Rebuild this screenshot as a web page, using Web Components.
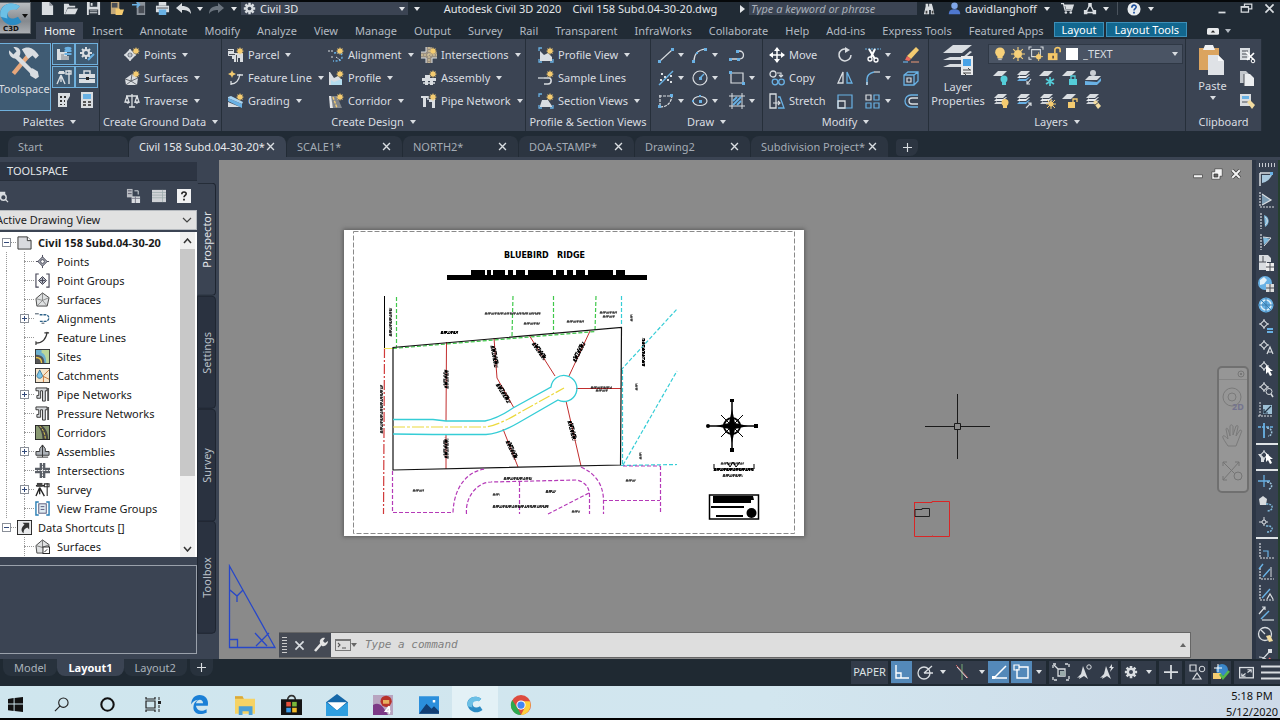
<!DOCTYPE html>
<html lang="en">
<head>
<meta charset="utf-8">
<title>Autodesk Civil 3D 2020 - Civil 158 Subd.04-30-20.dwg</title>
<style>
  html, body { margin: 0; height: 100%; background: #000; overflow: hidden; }
  body { font: 11px/16px "Noto Sans", "Open Sans", sans-serif; color: #d6dade; }
</style>
</head>
<body>
<c3d-app></c3d-app>
<script>
const BASE = `
  * { box-sizing: border-box; }
  button, a, input, select { font: inherit; color: inherit; background: none; border: 0; margin: 0; padding: 0; text-decoration: none; border-radius: 0; outline: 0; }
  button { display: inline-flex; align-items: center; justify-content: center; white-space: nowrap; }
  select { appearance: none; }
  .caret { display: block; flex: none; width: 0; height: 0; border: 3px solid transparent; border-top: 4px solid currentColor; border-bottom: 0; }
`;
function define(tag, css, render) {
  customElements.define(tag, class extends HTMLElement {
    connectedCallback() {
      if (this.shadowRoot) return;
      const t = document.createElement('template');
      t.innerHTML = `<style>${BASE}${css}</style>` + (typeof render === 'function' ? render(this) : render);
      this.attachShadow({ mode: 'open' }).append(t.content.cloneNode(true));
    }
  });
}

/* ---------- icons ---------- */
const W = '#d9dde1', B = '#69b1e4', Y = '#f4cb70', D = '#4a4f57';
const star = `<path fill="${Y}" d="M12 0l.9 2 2-.8-.8 2 1.9.8-1.9.9.8 2-2-.8-.9 1.9-.9-1.9-2 .8.8-2L8 4l1.900-.8-.8-2 2 .8z"/>`;
const l = (d, c = W, w = 1.2, x = '') => `<path fill="none" stroke="${c}" stroke-width="${w}" d="${d}" ${x}/>`;
const f = (d, c = W, x = '') => `<path fill="${c}" d="${d}" ${x}/>`;
const stack = (a, b) => f('M5 1h9l-4 4H1z') + f('M4 5l-3 3h9l4-4h-1l-3 2H4z', a) + f('M4 8l-3 3h9l4-4h-1l-3 2H4z', b);
const target = (c = W) => l('M6 1v10M1 6h10', c, 1) + `<rect x="3.500" y="3.500" width="5" height="5" transform="rotate(45 6 6)" fill="#3b4453" stroke="${c}"/>`;
const ICONS = {
  new: f('M2 1h8l4 4v10H2z') + f('M10 1v4h4z', '#8a9099'),
  open: f('M1 3h5l1 2h6v2H5l-3 7H1z') + f('M5 8h11l-3 6H2z'),
  save: f('M1 1h14v14H1z') + f('M4 1h8v5H4zM3 9h10v6H3z', '#2a333d') + f('M5 2h2v3H5zM4 10h8v1H4zM4 12h8v1H4z'),
  saveas: f('M2 0h9v14H2z', '#c3a879') + f('M3 2h6v5H3z', D) + f('M7 8h4l1 1h4l-2 6H7z', Y),
  import: f('M5 1h9v14H5z', '#8b929a') + f('M7 5h6v8H7z', D) + l('M0 4h8M5 1l3 3-3 3', B, 1.6),
  print: f('M4 1h8v4H4z') + f('M1 5h14v7H1z') + f('M4 9h8v6H4z', B) + f('M2 7h12v1H2z', D),
  undo: f('M6 2v3c5 0 9 2 9 8-2-3-4-4-9-4v3L0 7z'),
  redo: f('M10 2v3C5 5 1 7 1 13c2-3 4-4 9-4v3l6-5z', '#6b747e'),
  gear: l('M8 1v14M1 8h14M3 3l10 10M13 3L3 13', W, 3) + `<circle cx="8" cy="8" r="5" fill="${W}"/><circle cx="8" cy="8" r="2.300" fill="#3b4453"/>`,
  binoc: f('M3 2h3v3h1V2h3l1 3 2 9H9v-5H7v5H1l2-9z', W) + f('M3 10h2v3H3zM10 10h2v3h-2z', '#444'),
  user: `<circle cx="8" cy="4.500" r="4" fill="#7fa6e8"/>` + f('M1 15c0-5 3-6 7-6s7 1 7 6z', '#4f78cf'),
  cart: l('M0 2h3l2 8h8l2-6H4', W, 1.6) + `<circle cx="6" cy="13" r="1.600" fill="${W}"/><circle cx="12" cy="13" r="1.600" fill="${W}"/>` + f('M5 4h10l-2 5H6z'),
  store: l('M8 3L3 12h10z', W, 1.5) + f('M6 1h4v4H6zM1 9h4v5H1zM11 9h4v5h-4z'),
  help: `<circle cx="8" cy="8" r="7.500" fill="#e9edf0"/><path d="M5.500 6.500c0-4 5-3.500 5-.8 0 1.800-2.500 1.900-2.500 4" fill="none" stroke="#1d4f9c" stroke-width="1.800"/><path d="M7 11h2v2H7z" fill="#1d4f9c"/>`,
  min: f('M4 11h8v2H4z'),
  restore: l('M5.500 5V2.500h9v6H11', W, 1.500) + l('M1.500 6h9v6.500h-9z', W, 1.500) + f('M1 5h10v2H1z'),
  close: l('M3 3l10 10M13 3L3 13', W, 2),
  /* window buttons that lie on the drawing: white with a dark rim */
  wmin: `<path d="M2 9h12v4H2z" fill="#f4f4f4" stroke="#444"/>`,
  wrestore: `<path d="M5 1h10v10h-3v4H1V5h4z" fill="#f4f4f4" stroke="#444"/><path d="M4 8h5v4H4z" fill="#666" stroke="#333"/>`,
  wclose: l('M3 3l10 10M13 3L3 13', '#444', 5) + l('M3 3l10 10M13 3L3 13', '#f4f4f4', 2.6),
  cap: `<rect x="0" y="4" width="16" height="9" rx="2" fill="#e8eaec"/>` + f('M5 10l3-3 3 3z', '#222'),
  toolspace: l('M20 9L6 26', '#e7a77b', 4) + l('M9 10l16 16', W, 4) + f('M2 4l4 4 3-3-3-4c5-1 8 3 6 8l-3 3C5 12 1 9 2 4z') + f('M14 3c5-3 11-2 16 6l-3 3-3-3-4 3-3-4z') + f('M21 22l3-1 5 3 1 5-3 2-5-3z'),
  t1: f('M1 3h3v11H1zM4 6h7v8H4z') + f('M5 14v-6h3v2h5v4z', '#aab0b6') + `<ellipse cx="12" cy="2.500" rx="3.500" ry="1.800" fill="${B}"/>` + f('M8.500 4h7v2h-7zM8.500 7h7v2h-7z', B),
  t2: l('M7 1v12M1 7h12M3 3l8 8M11 3l-8 8', W, 2) + `<circle cx="7" cy="7" r="4" fill="${W}"/><circle cx="7" cy="7" r="2" fill="#3f5b73"/>` + l('M9 14l6-6', B, 2),
  t3: l('M5 6L1 15M5 6l4 9M5 6v7M2 4h7', W, 1.400) + f('M3 2h5v3H3z') + l('M13 1v14M10 2h5v3h-5z', W, 1.400),
  t4: f('M0 5h16v9H0z') + l('M5 5V2h6v3', W, 1.500) + f('M0 9h16v1H0z', '#3f5b73') + f('M7 8h3v3H7z', '#222'),
  t5: f('M2 1h12v3l-3 5v6H2z') + f('M4 4h2v2H4zM8 4h2v2H8zM4 8h2v2H4zM8 8h1v2H8zM4 12h2v1H4zM8 12h1v1H8z', '#333'),
  t6: f('M2 0h12v16H2z') + f('M4 2h8v5H4z', B) + f('M4 9h3v2H4zM9 9h3v2H9zM4 12h3v2H4zM9 12h3v2H9z', '#555'),
  points: l('M6 2v12M0 8h12', W, 1.200) + `<rect x="2.800" y="4.800" width="6.400" height="6.400" transform="rotate(45 6 8)" fill="none" stroke="${W}" stroke-width="2"/>` + star,
  surfaces: f('M1 9l7-5 6 4-1 7H2z') + l('M1 9l6 2 7-3M7 11l-5 4M7 11l6 4M8 4l-1 7', D, .8) + star,
  traverse: l('M8 1v13M5 14h6M2 3h12M3 3L1 9h4L3 3M13 3l-2 6h4l-2-6', W, 1.300) + f('M1 9h5l-2 2zM10 9h5l-2 2z'),
  parcel: f('M0 2h6v4h9v9h-3v-4h-2v4H6v-3H4V9H0z') + f('M1 7h6v1H1zM8 8h1v7H8zM0 3h5v1H0z', D) + star,
  feature: l('M3 14c6 0 8-4 9-10M9 5h6M3 11v4', W, 1.300) + `<path fill="${Y}" d="M4 0l1 2.500L8 4 5 5.500 4 8 3 5.500 0 4l3-1.500z"/>`,
  grading: f('M0 5l14 6v4L0 8z', B) + f('M0 4l3-1 12 6-1 2L0 5z', '#a8d3f1') + f('M0 9l12 5H0z') + star,
  align: l('M0 4h6M3 10h2M8 10l4 3', W, 1, 'stroke-dasharray="2 1"') + l('M6 6c6-1 8 0 8 4s-4 4-9 4', B, 1.400, 'stroke-dasharray="2 1.500"') + star,
  profile: f('M1 2h1l4 6 4-2 4 4v5H1z') + f('M3 10l3 2 8-3v6H3z', '#b4ddee') + star,
  corridor: f('M2 3h7l5 12H5z', '#7f848b') + f('M1 3h2l2 12H2z', '#e6e8ea') + l('M5 4l4 11', Y, 1.400, 'stroke-dasharray="3 1"') + star,
  inter: f('M5 0h6v5h5v6h-5v5H5v-5H0V5h5z', '#9a8f80') + l('M8 0v16M0 8h16', '#e6d3a0', 1, 'stroke-dasharray="2 1"') + l('M5 0v5H0M11 16v-5h5M5 16v-5H0', W, 1) + star,
  assembly: f('M1 8h6V5h2v3h6v3H1z') + f('M2 12h12v2H2z', '#aeb4ba') + f('M4 5h3v10H4zM9 8h3v7H9z') + star,
  pipe: f('M0 3h7v2H5v9H2V5H0z') + f('M8 6h6v9h-3V9H8z') + l('M7 3v4', W, 1.500) + star,
  pview: l('M1 4V1h3M1 12v3h3M12 15h3v-3', B, 1.300) + f('M2 4l4 4 4-2 4 4v4H2z') + star,
  sample: l('M0 8h6', W, 1.300) + l('M6 8h5c3 0 3 6-1 6H6', W, 1.600) + star,
  sview: l('M1 4V1h3M1 12v3h3M12 15h3v-3', B, 1.300) + f('M2 13l2-6h6l4 6v1H2z') + star,
  line: l('M2 14L14 3', W, 1.100) + f('M0 13h3v3H0zM13 1h3v3h-3z', B),
  arc: l('M2 14C2 7 6 3 13 2', W, 1.200) + f('M0 13h3v3H0zM12 1h3v3h-3zM4 5h2v2H4z', B),
  pline: l('M1 12h9c6 0 6-8 0-8H9', W, 1.300) + f('M0 11h3v3H0zM7 3h3v3H7zM8 11h3v3H8z', B),
  xline: l('M1 15L15 1', B, 1.500) + f('M3 3h2v2H3zM6 6h2v2H6zM12 11h2v2h-2zM9 9h2v2H9zM2 9h2v2H2zM12 5h2v2h-2z'),
  circle: `<circle cx="8" cy="8" r="7" fill="none" stroke="${W}" stroke-width="1.200"/>` + l('M8 8l4-4', B, 1.500) + f('M7 7h3v3H7z', B),
  rect: l('M2 3h12v10H2z', W, 1.200) + f('M0 1h3v3H0zM13 12h3v3h-3z', B),
  curve: l('M2 2v12M1 3h13M2 14c7 0 11-4 12-11', W, 1.200, 'stroke-dasharray="3 1"') + f('M0 12h3v3H0zM12 1h3v3h-3z', B),
  ellipse: `<ellipse cx="8" cy="8" rx="7" ry="4.500" fill="none" stroke="${W}" stroke-width="1.200"/>` + f('M7 7h3v3H7zM0 7h2v2H0zM7 2h2v2H7z', B),
  hatch: l('M3 0v16M13 0v16M0 3h16M0 13h16', W, 1) + l('M4 8l4-4M4 12l8-8M8 12l4-4', B, 1.800),
  move: l('M8 1v14M1 8h14', '#fff', 1.500) + f('M8 0l3 4H5zM8 16l3-4H5zM0 8l4-3v6zM16 8l-4-3v6z', '#fff'),
  copy: `<circle cx="4" cy="4" r="3" fill="none" stroke="${W}" stroke-width="1.300"/><circle cx="6" cy="12" r="2.800" fill="none" stroke="${B}" stroke-width="1.300"/><circle cx="12.500" cy="12" r="2.800" fill="none" stroke="${B}" stroke-width="1.300"/>` + l('M8 3h4v4M10 5l2 2 2-2'),
  stretch: l('M1 1h6v14H1z', W, 1.300) + l('M9 4h2l4 11H9', B, 1.300) + l('M4 10h7M9 8l2 2-2 2'),
  rotate: l('M9 2a6 6 0 1 0 5 6', W, 1.500) + f('M8 0l5 3-5 3z'),
  mirror: l('M6 2v11H1z', W, 1.300) + l('M10 2v11h5z', B, 1.300),
  scale: l('M1 2h14v13H1z', B, 1.200) + l('M1 8h7v7H1z', W, 1.300),
  trim: l('M0 2h16', B, 1, 'stroke-dasharray="2 1"') + l('M4 2l6 10M10 2L6 10', '#fff', 2) + `<circle cx="5" cy="12" r="2" fill="none" stroke="#fff" stroke-width="1.300"/><circle cx="11" cy="13" r="2" fill="none" stroke="#fff" stroke-width="1.300"/>`,
  fillet: l('M2 15V9c0-4 3-6 7-7', B, 1.500) + l('M9 2h6', W, 1.200) + l('M2 15v-3'),
  array: l('M1 2h5v5H1z') + l('M9 2h5v5H9zM1 10h5v5H1zM9 10h5v5H9z', B),
  erase: f('M13 0l3 3-8 9-4-3z', Y) + f('M4 9l4 3-2 2-4-1z', '#ee6a5c') + l('M0 15h5', B) + l('M8 15h8', '#e97', 1),
  explode: l('M5 2h10v9l-4 4H1V5zM1 5h10v10M11 5l4-3', B, 1.300) + l('M4 8h4v4H4z', W),
  offset: l('M15 2H8a5.500 5.500 0 0 0 0 12h7', B, 1.300) + l('M15 5H9a3 3 0 0 0 0 6h6', W, 1.300),
  layerprop: f('M11 1h19l-10 8H1z') + f('M8 13h13l7-6 2 1-10 8H1z') + f('M8 20h13l7-6 2 1-10 8H1z') + `<rect x="19" y="12" width="12" height="19" fill="#e8eaec"/>` + f('M21 15h8v7h-8z', '#4aa3e6') + l('M21 26h8M21 29h8M26 24l2 2M24 31l-2-2', '#444', 1),
  bulb: `<circle cx="8" cy="6" r="5.500" fill="#f6d07a"/>` + f('M5 10h6v3H5z', '#f6d07a') + f('M6 13h4v2H6z', '#bbb'),
  sun: l('M8 0v16M0 8h16M2.500 2.500l11 11M13.500 2.500l-11 11', '#f6d07a', 1.300) + `<circle cx="8" cy="8" r="4.500" fill="#f6d07a"/>`,
  vp: l('M3 3h10v8H3z') + l('M0 3V0h3M13 0h3v3M0 11v3h3', W, 1.200) + `<circle cx="11" cy="11" r="3" fill="${Y}"/>` + l('M11 6v10M6 11h10', Y, 1),
  unlock: f('M1 7h11v8H1z', '#f6c868') + l('M9 7V3c0-3 6-3 6 0v3', '#f6c868', 1.800) + f('M6 10h2v3H6z', '#654'),
  la: f('M5 1h9l-5 5H0z') + `<circle cx="11" cy="9" r="3.500" fill="#54cdd9"/>` + f('M9 12h4v3H9z', '#54cdd9'),
  lb: stack('#e7eaed', B) + l('M15 9l-4 5M11 11v3h3'),
  lc: f('M5 1h9l-5 5H0z') + l('M11 7v9M7 9l8 5M15 9l-8 5', '#54cdd9', 1.700),
  ld: f('M5 1h9l-5 5H0z') + f('M7 9h8v6H7z', '#54cdd9') + l('M9 9V6h4v3', '#54cdd9', 1.300),
  le: f('M4 6h12l-4 4H0z') + f('M0 11l12 1 4-4v3l-4 4H0z', B) + `<circle cx="8" cy="3" r="3" fill="#c9cdd2"/>`,
  lf: stack('#e7eaed', '#cfd3d8') + `<circle cx="12" cy="9.500" r="3.500" fill="${Y}"/>` + f('M10 12h4v3h-4z', Y),
  lg: stack('#e7eaed', B) + l('M10 15l5-5M12 10h3v3'),
  lh: stack('#e7eaed', '#cfd3d8') + l('M12 6v10M7 11h10M8 7l8 8M16 7l-8 8', Y, 1) + `<circle cx="12" cy="11" r="2.500" fill="${Y}"/>`,
  li: f('M5 1h9l-5 5H0z') + f('M6 9h7v6H6z', Y) + l('M11 9V6h4v3', Y, 1.300),
  lj: stack('#e7eaed', '#cfd3d8') + f('M8 9l3-2 5 6-3 3z', '#f2dca0') + l('M10 12l4-3', '#555', 1),
  paste: f('M2 4h20v22H2z', '#dba45f') + f('M8 1h8l2 5H6z', '#f0f2f4') + f('M11 11h10l6 6v14H11z', '#dfe2e6') + f('M21 11v6h6z', '#f8f9fa'),
  cut: f('M1 1h10v12H1z') + l('M3 4h6M3 7h6M3 10h5', D, 1) + l('M7 5l8 8M15 6l-7 7', '#fff', 1.700) + `<circle cx="14" cy="14" r="1.800" fill="none" stroke="#fff"/>`,
  copydoc: f('M1 1h6l3 3v9H1z', '#c3c7cc') + f('M5 4h6l4 4v8H5z', '#eceef0') + l('M5 4v12', D, 1),
  match: f('M1 1h11v12H1z') + f('M3 3h7v3H3z', B) + l('M3 9h6', D, 1) + f('M8 9l3-2 5 5-3 4z', '#f2dca0'),
  newitem: f('M0 4h12v8H0z') + `<circle cx="10" cy="10" r="3" fill="#3b4453" stroke="${W}" stroke-width="1.500"/>` + l('M12 12l3 3'),
  ref: f('M1 1h6v9H1z', '#b9bdc3') + l('M2 3h4M2 6h4', '#556', 1) + f('M6 9h9v7H6z') + l('M10 9v7M6 11h9', '#778', 1) + l('M9 3h4v4', W, 1),
  sheetv: f('M0 1h16v14H0z', '#cfd2d6') + l('M0 4h16M0 7h16M0 10h16M12 1v14', '#9aa', .8),
  qbox: f('M0 0h16v16H0z', '#f0f1f2') + `<path d="M5.500 6c0-3.500 5-3 5-.5 0 1.800-2.500 2-2.500 4" fill="none" stroke="#222" stroke-width="1.800"/>` + f('M7 11h2v2H7z', '#222'),
  /* toolspace tree */
  r_dwg: `<path d="M1 2h10l4 4v9H1z" fill="#d9dade" stroke="#333"/><path d="M11 2v4h4" fill="#fff" stroke="#333"/>`,
  r_points: l('M8 1v14M1 8h14', '#445', 1) + `<rect x="4.500" y="4.500" width="7" height="7" transform="rotate(45 8 8)" fill="#aeb3ba" stroke="#445"/><circle cx="8" cy="8" r="2" fill="#fff" stroke="#445"/>`,
  r_pgroups: l('M4 1H1v14h3M12 1h3v14h-3', '#445', 1.200) + `<rect x="5" y="5" width="6" height="6" transform="rotate(45 8 8)" fill="#b9bec6" stroke="#445"/><path d="M8 5v6M5 8h6" stroke="#445"/>`,
  r_surf: `<path d="M8 1l7 5-2 9H2L1 7z" fill="#dfe1e2" stroke="#444"/><path d="M8 1v8l7-3M8 9l5 6M8 9l-6 6M8 9L1 7" fill="none" stroke="#777" stroke-width=".8"/>`,
  r_align: l('M0 3h4M7 13h3', '#345', 1) + l('M5 4h6c5 0 5 7 0 7H5', '#2d6289', 1.400, 'stroke-dasharray="3 1"'),
  r_feat: l('M1 14c7 0 11-5 12-12M10 3h5M1 12v4', '#333', 1.200),
  r_sites: `<rect x=".5" y=".5" width="15" height="15" fill="#6cb0cf" stroke="#333"/><path d="M1 15V6c7 0 9 4 9 9" fill="#555"/><path d="M1 9c4 0 6 2 6 6" stroke="#e8c44a" fill="none" stroke-width="1.500"/><path d="M7 1h8v14h-3C12 8 10 5 7 4z" fill="#bcd79a"/>`,
  r_catch: `<rect x=".5" y=".5" width="15" height="15" fill="#f6e6cd" stroke="#333"/><path d="M5 2l3 6c0 4-6 4-6 0z" fill="#7cc4e8" stroke="#27648a" stroke-width=".8"/><path d="M9 15V8l6-6M9 9l6 3" stroke="#c9753a" fill="none"/>`,
  r_pipe: `<path d="M1 1h12v3h-2v11H8V4H6v8H2V9h2V4H1z" fill="#d5d8db" stroke="#333"/>` + f('M12 1h3v14h-2V4z', '#555'),
  r_corr: `<rect x=".5" y=".5" width="15" height="15" fill="#8a9a72" stroke="#222"/><path d="M3 1h5c4 3 6 8 6 14H8C8 9 6 4 3 1z" fill="#444"/><path d="M5 1c4 4 6 9 6 14" stroke="#e8d34a" fill="none" stroke-dasharray="3 1"/>`,
  r_asm: `<path d="M5 5l3-4 3 4v3h4v4H1V8h4z" fill="#aeb3b9" stroke="#333"/><path d="M8 1v13M2 14h12" stroke="#333"/>`,
  r_int: f('M5 0h6v5h5v6h-5v5H5v-5H0V5h5z', '#5b6067') + l('M8 0v16M0 8h16', '#fff', 1, 'stroke-dasharray="2 1"'),
  r_survey: l('M5 6L1 15M5 6l5 9M5 6v7M1 4h9', '#222', 1.400) + f('M2 1h6v4H2z', '#444') + l('M13 1v14M10 2h5v3h-5z', '#333', 1.200),
  r_vfg: `<path d="M4 1H1v14h3M12 1h3v14h-3" fill="none" stroke="#2a7fb5" stroke-width="1.500"/><rect x="4" y="3" width="8" height="10" fill="#dfeaf1" stroke="#557"/><path d="M6 6h4M6 9h4" stroke="#557"/>`,
  r_ds: `<rect x=".5" y=".5" width="15" height="15" fill="#e9eaec" stroke="#222"/><path d="M6 3h7v7l-2-2c-3 1-4 3-4 6-3-2-3-6 1-9z" fill="#333"/>`,
  r_surf2: `<path d="M8 1l7 5-2 9H2L1 7z" fill="#dfe1e2" stroke="#444"/><path d="M8 1v8l7-3M8 9L1 7" fill="none" stroke="#777"/><rect x="8.500" y="8.500" width="7" height="7" fill="#fff" stroke="#222"/><path d="M10 14l3-3" stroke="#222"/>`,
  /* right rail */
  q1: l('M2 15V2M2 2h13', W, 1.500) + f('M4 4h10c-2 4-5 7-10 8z', '#a9c9de') + f('M12 1h3v3h-3z', B),
  q2: l('M2 0v15h14', W, 1.200, 'stroke-dasharray="2 1"') + f('M4 2l9 6-9 5z', '#7d9db4') + l('M4 2l9 6-9 5', W),
  q3: l('M3 0v16', W, 1.200, 'stroke-dasharray="2 1"') + f('M6 2c6 2 6 9 1 12z', '#7fb9dc') + l('M7 4c3 2 3 6 0 8', W, 1),
  q4: l('M3 0v16', W, 1.200, 'stroke-dasharray="2 1"') + f('M5 3l7 2-6 6z', '#7fb9dc') + l('M5 3l8 1-7 8', W, 1),
  q5: f('M1 0h9l3 3v4H9v8H1z') + l('M5 1v6H1M8 7H5', D, 1) + f('M8 8h8v8H8z', '#eee') + l('M8 12h8M12 8v8', D, 1),
  q6: `<circle cx="7" cy="7" r="7" fill="${B}"/>` + f('M2 4l4-3 3 3-3 4-4 1z', '#e2f0f8') + f('M8 8h8v8H8z', '#ddd') + l('M8 12h8M12 8v8', D, 1),
  q7: `<circle cx="8" cy="8" r="7.500" fill="${B}"/><circle cx="8" cy="8" r="5" fill="none" stroke="#e2f0f8" stroke-width="1.500"/>` + l('M8 0v16M0 8h16M3 3l10 10', '#3c7fb0', 1),
  q8: target() + f('M9 10h6v2H9zM9 13h6v2H9z', B),
  q9: target() + l('M9 15l3-7 3 7M10 13h4', W, 1.200),
  q10: target() + f('M8 5l7 6h-3l2 4-2 1-2-4-2 2z', '#fff'),
  q11: target() + `<circle cx="11" cy="10.500" r="3" fill="none" stroke="${W}"/>` + l('M13 13l2 3', W, 1.500),
  q12: l('M2 0v15M0 14h14', W, 1, 'stroke-dasharray="2 1"') + f('M5 3h9v9H5z', '#9cc0d6') + l('M13 4l-7 7M6 7v4h4', '#234', 1.200),
  q13: l('M0 4h15', B, 1.500, 'stroke-dasharray="3 1"') + l('M6 0v15', B, 1.800) + l('M9 5c6 0 6 8 1 8', '#9fc6df', 1.500, 'stroke-dasharray="2 1"'),
  q14: f('M0 5h9L6 9v4H3V9z') + target() + f('M8 4l7 6h-3l2 4-2 1-2-4-2 2z', '#fff'),
  q15: l('M0 6h12M6 0v12', B, 1.300) + l('M9 7c6 0 6 7 1 7', '#9fc6df', 1.500, 'stroke-dasharray="2 1"'),
  q16: f('M1 3l4-3 4 3-1 6H2z', '#d9dcdf') + l('M8 8c8-1 8 7 1 7', '#7fb9dc', 1.500, 'stroke-dasharray="2 1"'),
  q17: l('M6 0v9M1 5h9', W, 1) + `<circle cx="6" cy="5" r="2" fill="#3b4453" stroke="${W}"/>` + l('M8 9c8-1 8 6 1 6', '#7fb9dc', 1.500, 'stroke-dasharray="2 1"'),
  q18: l('M2 0v15h14', W, 1.200, 'stroke-dasharray="2 1"') + l('M5 8h5v6', B, 1.200),
  q19: l('M2 4v11h14', W, 1.200, 'stroke-dasharray="2 1"') + l('M1 5l4-5M5 13l7-8', B, 1.400) + l('M13 3v10', W, 1),
  q20: l('M2 0v15h14', W, 1.200, 'stroke-dasharray="2 1"') + l('M4 13l8-9', B, 1.400) + l('M9 14l3-5 3 5', W),
  q21: l('M1 8l6-7M4 1h3v3', W) + l('M3 13l8-8', B, 1.500) + l('M4 14h12', W, 1.200),
  q22: `<circle cx="7" cy="7" r="6.500" fill="none" stroke="${W}" stroke-width="1.300"/>` + l('M7 7L3 3') + f('M8 9l4-1 3 6-4 1z', '#f2dca0'),
  q23: l('M1 15L12 3M1 9c5 0 8 2 9 6', W, 1.200) + f('M10 1h4v4h-4z') + l('M11 10l4 4', '#e66', 1.500),
  /* status bar */
  ortho: l('M2 1v13h13M2 9h5v5', '#fff', 1.400),
  polar: `<circle cx="7" cy="9" r="6" fill="none" stroke="${W}" stroke-width="1.300"/>` + l('M7 9h9M7 9l8-7', W, 1.300),
  iso: l('M2 1l12 13', '#c66', 1) + l('M8 0v16', '#7a7', 1) + l('M3 3l10 11', W, 1),
  otrack: l('M15 2L3 14h13', '#fff', 1.500) + f('M1 12h3v3H1z', '#fff'),
  osnap: l('M5 3h9v11H3V5', '#fff', 1.400) + l('M0 1h5v5H0z', '#fff', 1.200),
  anno1: l('M0 4V0h4M12 0h4v4M16 12v4h-4M4 16H0v-4', W, 1.300, 'stroke-dasharray="3 1"') + l('M5 5h7v7H5zM1 1l4 4', W, 1.300) + f('M7 7h5v5H7z', '#9aa'),
  anno2: f('M7 2l3 8 2 5-4-3-5 3 2-5zM1 14l4-4 2 2z') + `<circle cx="13" cy="3" r="2.200" fill="none" stroke="${W}"/>`,
  anno3: f('M7 2l3 8 2 5-4-3-5 3 2-5zM1 14l4-4 2 2z') + f('M13 0l-3 4h2l-1 4 4-5h-2z'),
  plus: l('M8 0v16M0 8h16', W, 2),
  shapes: l('M1 1h6v6H1z') + `<circle cx="13" cy="5" r="2.800" fill="none" stroke="${W}"/>` + l('M8 9l4 6H4z'),
  globe: `<circle cx="9" cy="6" r="6" fill="#3a86c8"/>` + f('M0 9h8v6H0z', Y) + l('M7 10l3 4 6-7', '#54b948', 2.500) + l('M5 0v8M1 4h8', '#fff', 1),
  full: `<rect x="0.700" y="2.700" width="14.600" height="11" fill="none" stroke="${W}" stroke-width="1.400"/>` + l('M9 5h4v3M7 12H3V9M13 5L9 8M3 12l4-3'),
  menu: l('M0 3h16M0 8h16M0 13h16', W, 1.600),
  prompt: `<rect x="0.500" y="2.500" width="15" height="11" fill="#ddd" stroke="#777"/>` + f('M0 2h16v2H0z', '#777') + l('M3 6l2 2-2 2M7 11h4', '#555', 1.100),
  wrench: l('M3 14L10 6', '#e4e4e4', 2.500) + f('M8 6c-1-3 2-6 5-5l-2 3 2 2 3-2c0 3-3 6-6 5z', '#e4e4e4'),
  /* taskbar */
  win: f('M0 2l6-1v6H0zM7 1l9-1v7H7zM0 8h6v7l-6-1zM7 8h9v8l-9-1z', '#111'),
  search: `<circle cx="10" cy="6" r="5" fill="none" stroke="#222" stroke-width="1.200"/>` + l('M6.500 9.500L1 15', '#222', 1.200),
  cortana: `<circle cx="8" cy="8" r="6.600" fill="none" stroke="#111" stroke-width="2.200"/>`,
  task: l('M1 4h9v7H1zM1 0v2h9V0M1 15v-2h9v2', '#222', 1.200) + l('M14 0v16', '#222', 1, 'stroke-dasharray="3 1"') + f('M13 4h3v3h-3z', '#222'),
  edge: f('M1 8C1 3 4 0 8 0c5 0 8 4 7 9H5c1 5 6 5 9 3v3C6 18 2 14 3 9c0-2 2-4 4-5C4 4 2 6 1 8zM5 7h6c0-4-5-4-6 0z', '#1a7fd6', 'fill-rule="evenodd"'),
  folder: f('M0 1h6l1 2h9v12H0z', '#f6d365') + f('M0 1h6l1 2H0z', '#d9a93a') + f('M3 9h11v7h-3v-3H6v3H3z', '#4b9fd6'),
  shop: l('M5 5c0-5 6-5 6 0', '#333', 1.200) + f('M0 4h16v12H0z', '#151515') + f('M4 6h3.500v3.500H4z', '#e8503a') + f('M8.500 6H12v3.500H8.500z', '#7ab83a') + f('M4 10.500h3.500V14H4z', '#3a9be8') + f('M8.500 10.500H12V14H8.500z', '#f2bb2a'),
  mail: f('M0 6l8-6 8 6v10H0z', '#1567a8') + f('M1 6h14l-7 6z', '#fff') + f('M0 6l8 6 8-6v10H0z', '#2f9fe0'),
  app4: f('M0 0h16v16H0z', '#b8a5c0') + f('M0 8c5-3 8 1 12 8H0z', '#7c3a86') + `<circle cx="10.500" cy="5" r="4.500" fill="#b8322a"/>` + f('M8 4h5v3H8z', '#e8b060') + l('M13 9l-3 4h4M13 9v6', '#fff', 1.300),
  photos: f('M0 1h16v14H0z', '#2b8fdc') + f('M0 15l6-8 4 4 2-2 4 4v2z', '#123e73') + f('M11 4h2v2h-2z', '#fff'),
  c3d: `<path d="M13 3C7-1 1 3 2 8s7 8 12 4l-2-3c-3 2-6 1-6-2s3-4 5-2z" fill="#2b8bc4"/><path d="M13 3l-2 2c-4-1-6 2-5 5L2 9C1 3 7-1 13 3z" fill="#6cc0e6"/>`,
  chrome: `<circle cx="8" cy="8" r="8" fill="#dd4b3e"/><path d="M1 4l5 8 2 4A8 8 0 0 1 1 4z" fill="#2da94f"/><path d="M15 5H8l3 5-3 6a8 8 0 0 0 7-11z" fill="#fdd03b"/><circle cx="8" cy="8" r="3.700" fill="#fff"/><circle cx="8" cy="8" r="2.900" fill="#4285f4"/>`,
};
define('c3d-icon', `:host { display: inline-block; flex: none; width: var(--size, 16px); height: var(--size, 16px); } svg { display: block; width: 100%; height: 100%; overflow: visible; }`,
  el => { const b = el.getAttribute('box') || 16; return `<svg viewBox="0 0 ${b} ${b}" aria-hidden="true">${ICONS[el.getAttribute('name')] || ''}</svg>`; });
const ic = (n, s = 16, b = 16) => `<c3d-icon name="${n}" box="${b}" style="--size:${s}px"></c3d-icon>`;
const caret = '<i class="caret"></i>';

/* ---------- title bar and ribbon tabs ---------- */
define('c3d-titlebar', `
  :host { display: flex; height: 20px; align-items: center; padding-bottom: 5px; border-top: 2px solid #05080a; color: #e4e7ea; }
  .q { width: 23px; height: 13px; overflow: hidden; } .u { width: 20px; } .c { width: 12px; } .c2 { width: 15px; }
  .ws { display: flex; align-items: center; width: 167px; height: 13px; background: #3b4453; padding: 0 3px 0 2px; gap: 4px; }
  .ws select { flex: 1; min-width: 0; }
  .more { width: 18px; } .t { flex: 1; display: flex; gap: 11px; justify-content: center; white-space: nowrap; }
  input { width: 168px; height: 13px; background: #3b4453; padding: 0 2px; font-style: italic; }
  input::placeholder { color: #aab1ba; opacity: 1; }
  .r { display: flex; align-items: center; width: 363px; }
  .r button { height: 13px; } .sep { width: 1px; height: 13px; background: #4a535d; }
  .go { width: 14px; } .go i { border: 4px solid transparent; border-left: 5px solid; border-right: 0; }
`, `
  ${['new', 'open', 'save', 'saveas', 'import', 'print'].map(n => `<button class="q" aria-label="${n}">${ic(n, 15)}</button>`).join('')}
  <button class="u" aria-label="Undo">${ic('undo', 16)}</button><button class="c" aria-label="Undo list">${caret}</button>
  <button class="u" aria-label="Redo">${ic('redo', 16)}</button><button class="c2" aria-label="Redo list">${caret}</button>
  <span class="ws">${ic('gear', 13)}<select aria-label="Workspace"><option>Civil 3D</option></select>${caret}</span>
  <button class="more" aria-label="Customize">${caret}</button>
  <span class="t"><span>Autodesk Civil 3D 2020</span><span>Civil 158 Subd.04-30-20.dwg</span></span>
  <button class="go" aria-label="Expand search"><i class="caret"></i></button>
  <input aria-label="Search" placeholder="Type a keyword or phrase">
  <div class="r">
    <button style="width:26px" aria-label="Find">${ic('binoc', 14)}</button>
    <button style="width:22px" aria-label="Account">${ic('user', 13)}</button>
    <button style="width:90px;justify-content:space-between;padding-right:5px">davidlanghoff${caret}</button>
    <button style="width:24px" aria-label="Cart">${ic('cart', 13)}</button>
    <button style="width:22px" aria-label="Store">${ic('store', 14)}</button>
    <button style="width:10px" aria-label="Store list">${caret}</button>
    <i class="sep" style="margin:0 6px"></i>
    <button style="width:20px" aria-label="Help">${ic('help', 14)}</button>
    <button style="width:14px" aria-label="Help list">${caret}</button>
    <span style="flex:1"></span>
    <button style="width:24px" aria-label="Minimize">${ic('min', 14)}</button>
    <button style="width:24px" aria-label="Restore">${ic('restore', 13)}</button>
    <button style="width:22px" aria-label="Close">${ic('close', 13)}</button>
  </div>`);

const TABS = ['Home', 'Insert', 'Annotate', 'Modify', 'Analyze', 'View', 'Manage', 'Output', 'Survey', 'Rail', 'Transparent', 'InfraWorks', 'Collaborate', 'Help', 'Add-ins', 'Express Tools', 'Featured Apps', 'Layout', 'Layout Tools'];
define('c3d-tabs', `
  :host { display: flex; height: 19px; align-items: stretch; padding-left: 6px; color: #b3bac2; }
  button { padding: 0 8px 0 9px; height: 17px; margin-top: 2px; }
  .on { background: #3b4453; color: #f2f4f6; padding: 0 8px; }
  .ctx { background: #12678f; border: 1px solid #3d8fb8; color: #fff; height: 15px; margin-left: 2px; padding: 0 7px; margin-top: 2px; }
  .x { margin-left: 20px; gap: 6px; padding: 0; }
`, TABS.map((t, i) => `<button class="${i == 0 ? 'on' : i > 16 ? 'ctx' : ''}">${t}</button>`).join('') + `<button class="x" aria-label="Ribbon display">${ic('cap', 12)}${caret}</button>`);

define('c3d-appbutton', `
  :host { display: block; }
  button { width: 31px; height: 32px; margin-top: 2px; background: linear-gradient(#b9bdc1, #85898e 60%, #aaaeb2); border: 1px solid #60666c; border-left: 0; flex-direction: column; color: #111; position: relative; overflow: hidden; }
  b { font: bold 7px/7px "DejaVu Sans"; align-self: flex-start; margin: -3px 0 0 3px; }
  c3d-icon { margin: -3px 8px 0 0; }
  i.caret { position: absolute; right: 2px; top: 11px; }
`, `<button aria-label="Application menu">${ic('c3d', 28)}<b>C3D</b>${caret}</button>`);

/* ---------- ribbon ---------- */
define('c3d-tool', `
  :host { display: flex; align-items: center; min-width: 0; }
  button { gap: 4px; height: 21px; } :host([label]) .caret { margin-left: 2px; }
`, el => { const n = el.getAttribute('icon'), t = el.getAttribute('label');
  return `<button aria-label="${t || n}">${ic(n)}${t ? `<span>${t}</span>` : ''}${el.hasAttribute('menu') ? caret : ''}</button>`; });
const tool = (n, t, m) => `<c3d-tool icon="${n}" ${t ? `label="${t}"` : ''} ${m ? 'menu' : ''}></c3d-tool>`;

define('c3d-panel', `
  :host { display: flex; flex-direction: column; min-width: 0; background: #3b4453; border-right: 1px solid #262f3a; padding-top: 4px; }
  .b { height: 69px; min-width: 0; }
  .h { height: 19px; gap: 6px; align-self: stretch; }
`, el => `<div class="b"><slot></slot></div><button class="h">${el.getAttribute('name')}${el.hasAttribute('menu') ? caret : ''}</button>`);

define('c3d-ribbon', `
  :host { display: grid; grid-template-columns: 100fr 122fr 304fr 125fr 112fr 166fr 257fr 76fr 18px; background: #212b35; color: #d9dde1; }
  .g { display: grid; grid-auto-rows: 23px; align-items: center; }
  .pal { display: flex; gap: 1px; }
  .big { flex-direction: column; width: 51px; height: 68px; background: #3f5b73; border: 1px solid #6fb0dc; border-left: 0; justify-content: flex-start; padding: 2px 2px 0 0; line-height: 16px; gap: 1px; }
  .sm { display: grid; grid-template-columns: 23px 23px; grid-auto-rows: 23px; }
  .sm button { height: 22px; border: 1px solid transparent; } .sm .on { background: #3f5b73; border-color: #6fb0dc; }
  .lay { display: flex; gap: 1px; }
  .lp { flex-direction: column; width: 58px; height: 69px; line-height: 14px; justify-content: flex-start; padding: 1px 0 0; gap: 4px; }
  .cb { display: flex; align-items: center; height: 20px; margin: 1px 2px 6px 0; background: #4a5464; border: 1px solid #2f3845; padding: 0 4px; gap: 4px; }
  .cb select { flex: 1; min-width: 0; } .sw { width: 12px; height: 12px; background: #fff; margin: 0 1px 0 1px; }
  .right { flex: 1; min-width: 0; }
  .ls { display: grid; grid-template-columns: repeat(5, 23px); grid-auto-rows: 23px; padding-left: 1px; margin-top: -4px; align-items: center; }
  .ls button { height: 22px; }
  .clip { display: grid; grid-template-columns: 53px 23px; }
  .clip .lp { width: 53px; gap: 3px; }
`, `
  <c3d-panel name="Palettes" menu><div class="pal">
    <button class="big">${ic('toolspace', 34, 32)}Toolspace</button>
    <div class="sm">${['t1', 't2', 't3', 't4'].map(n => `<button class="on" aria-label="Palette ${n}">${ic(n)}</button>`).join('')}${['t5', 't6'].map(n => `<button aria-label="Palette ${n}">${ic(n)}</button>`).join('')}</div>
  </div></c3d-panel>
  <c3d-panel name="Create Ground Data" menu><div class="g" style="padding-left:24px">
    ${tool('points', 'Points', 1)}${tool('surfaces', 'Surfaces', 1)}${tool('traverse', 'Traverse', 1)}</div></c3d-panel>
  <c3d-panel name="Create Design" menu><div class="g" style="grid-template-columns:100px 93px auto;padding-left:6px">
    ${tool('parcel', 'Parcel', 1)}${tool('align', 'Alignment', 1)}${tool('inter', 'Intersections', 1)}
    ${tool('feature', 'Feature Line', 1)}${tool('profile', 'Profile', 1)}${tool('assembly', 'Assembly', 1)}
    ${tool('grading', 'Grading', 1)}${tool('corridor', 'Corridor', 1)}${tool('pipe', 'Pipe Network', 1)}</div></c3d-panel>
  <c3d-panel name="Profile &amp; Section Views"><div class="g" style="padding-left:12px">
    ${tool('pview', 'Profile View', 1)}${tool('sample', 'Sample Lines')}${tool('sview', 'Section Views', 1)}</div></c3d-panel>
  <c3d-panel name="Draw" menu><div class="g" style="grid-template-columns:34px 37px auto;padding-left:7px">
    ${tool('line', '', 1)}${tool('arc', '', 1)}${tool('pline')}${tool('xline', '', 1)}${tool('circle', '', 1)}${tool('rect', '', 1)}${tool('curve', '', 1)}${tool('ellipse', '', 1)}${tool('hatch', '', 1)}</div></c3d-panel>
  <c3d-panel name="Modify" menu><div class="g" style="grid-template-columns:68px 28px 38px auto;padding-left:6px">
    ${tool('move', 'Move')}${tool('rotate')}${tool('trim', '', 1)}${tool('erase')}${tool('copy', 'Copy')}${tool('mirror')}${tool('fillet', '', 1)}${tool('explode')}${tool('stretch', 'Stretch')}${tool('scale')}${tool('array', '', 1)}${tool('offset')}</div></c3d-panel>
  <c3d-panel name="Layers" menu><div class="lay">
    <button class="lp">${ic('layerprop', 32, 32)}<span>Layer<br>Properties</span></button>
    <div class="right"><div class="cb">${ic('bulb', 14)}${ic('sun', 14)}${ic('vp', 14)}${ic('unlock', 14)}<i class="sw"></i><select aria-label="Layer"><option>_TEXT</option></select>${caret}</div>
    <div class="ls">${'abcdefghij'.split('').map(c => `<button aria-label="Layer tool ${c}">${ic('l' + c)}</button>`).join('')}</div></div>
  </div></c3d-panel>
  <c3d-panel name="Clipboard"><div class="clip">
    <button class="lp">${ic('paste', 32, 32)}Paste${caret}</button>
    <div class="g">${tool('cut')}${tool('copydoc')}${tool('match')}</div></div></c3d-panel>`);

/* ---------- drawing tabs ---------- */
const DOCS = [['Start', 121], ['Civil 158 Subd.04-30-20*', 158], ['SCALE1*', 116], ['NORTH2*', 116], ['DOA-STAMP*', 116], ['Drawing2', 116], ['Subdivision Project*', 138]];
define('c3d-docs', `
  :host { display: flex; height: 29px; padding: 5px 0 0 8px; border-bottom: 3px solid #3b4453; color: #a4acb5; }
  .t { display: flex; align-items: center; height: 21px; padding: 0 10px; background: #2c3541; border-radius: 8px 8px 0 0; border-right: 1px solid #222b35; }
  .t button:first-child { flex: 1; justify-content: flex-start; }
  .t:first-child { padding-left: 14px; }
  .on { background: #3b4453; color: #e8ebee; }
  .add { width: 22px; height: 17px; margin: 3px 0 0 7px; background: #2c3541; border-radius: 4px 4px 8px 4px; }
`, DOCS.map(([t, w], i) => `<div class="t ${i == 1 ? 'on' : ''}" style="width:${w}px"><button>${t}</button>${i ? `<button aria-label="Close ${t}">${ic('close', 11)}</button>` : ''}</div>`).join('') + `<button class="add" aria-label="New tab">${ic('plus', 9)}</button>`);

/* ---------- toolspace ---------- */
const TREE = [['r_dwg', 'Civil 158 Subd.04-30-20', 0, '-'], ['r_points', 'Points', 1], ['r_pgroups', 'Point Groups', 1], ['r_surf', 'Surfaces', 1], ['r_align', 'Alignments', 1, '+'], ['r_feat', 'Feature Lines', 1], ['r_sites', 'Sites', 1], ['r_catch', 'Catchments', 1], ['r_pipe', 'Pipe Networks', 1, '+'], ['r_pipe', 'Pressure Networks', 1], ['r_corr', 'Corridors', 1], ['r_asm', 'Assemblies', 1, '+'], ['r_int', 'Intersections', 1], ['r_survey', 'Survey', 1, '+'], ['r_vfg', 'View Frame Groups', 1], ['r_ds', 'Data Shortcuts []', 0, '-'], ['r_surf2', 'Surfaces', 1]];
define('c3d-tree', `
  :host { display: flex; background: #fff; color: #1a1a1a; overflow: hidden; }
  ul { list-style: none; margin: 0; padding: 1px 0 0; flex: 1; min-width: 0; }
  li { display: flex; align-items: center; height: 19px; position: relative; }
  li.c { padding-left: 18px; }
  .e { width: 12px; height: 19px; margin-right: 5px; display: flex; align-items: center; justify-content: center; position: relative; flex: none; }
  .e::before { content: ""; position: absolute; left: 6px; width: 10px; top: 9px; border-top: 1px dotted #999; }
  li.c .e::after { content: ""; position: absolute; left: 6px; top: 0; height: 19px; border-left: 1px dotted #999; }
  li.c.in::before { content: ""; position: absolute; left: 6px; top: 0; height: 19px; border-left: 1px dotted #999; }
  .e button { width: 9px; height: 9px; background: #fff; border: 1px solid #8a8f98; z-index: 1; position: relative; }
  .e button::before, .e .p::after { content: ""; position: absolute; background: #334a7a; left: 1px; right: 1px; top: 3px; height: 1px; }
  .e .p::after { left: 3px; right: auto; width: 1px; top: 1px; height: 5px; }
  .n { margin-left: 7px; white-space: nowrap; } li:not(.c) .n { margin-left: 6px; } .b { font-weight: bold; }
  .s { width: 15px; margin-right: 2px; background: #f0f0f0; display: flex; flex-direction: column; justify-content: space-between; }
  .s button { height: 17px; } .s div { flex: 1; } .s div i { display: block; height: 78%; background: #c8c8c8; }
`, `<ul>${TREE.map(([n, t, d, e], i) => `<li class="${d ? 'c' : ''} ${i < 15 ? 'in' : ''}"><span class="e">${e ? `<button class="${e == '+' ? 'p' : ''}" aria-label="Toggle ${t}"></button>` : ''}</span>${ic(n, 15)}<span class="n ${i ? '' : 'b'}">${t}</span></li>`).join('')}</ul>
  <div class="s"><button aria-label="Scroll up"><svg width="9" height="6"><path d="M1 5l3.500-4L8 5" fill="none" stroke="#333" stroke-width="1.500"/></svg></button><div><i></i></div><button aria-label="Scroll down"><svg width="9" height="6"><path d="M1 1l3.500 4L8 1" fill="none" stroke="#333" stroke-width="1.500"/></svg></button></div>`);

define('c3d-toolspace', `
  :host { display: flex; background: #3b4453; width: 219px; flex: none; }
  .m { width: 197px; display: flex; flex-direction: column; padding-top: 2px; }
  h2 { margin: 0; font: inherit; color: #e2e5e8; background: #2d3543; height: 19px; padding: 1px 7px; border-bottom: 1px solid #262e3a; flex: none; }
  .tb { display: flex; height: 29px; align-items: center; gap: 11px; padding-right: 6px; flex: none; } .tb .sp { flex: 1; }
  .tb button:first-child { margin-left: -6px; }
  .sel { display: flex; height: 20px; background: #e1e1e1; align-items: center; color: #222; border: 1px solid #b5b9be; border-left: 0; padding-right: 4px; flex: none; }
  .sel select { flex: 1; margin-left: -4px; min-width: 0; }
  c3d-tree { flex: 325 1 0; min-height: 0; margin-top: 2px; }
  .d { flex: 87 1 0; margin: 8px 0 5px; border: 1px solid #9aa1ab; border-left: 0; min-height: 0; }
  .v { width: 20px; display: flex; flex-direction: column; padding: 23px 0 25px; }
  .v button { flex: 1; writing-mode: vertical-rl; transform: rotate(180deg); background: #2a3240; border: 1px solid #1f2631; border-radius: 4px 0 0 4px; color: #b9c0c8; width: 19px; margin-left: 0; }
  .v .on { background: #3b4453; color: #e2e5e8; border-right-color: #3b4453; }
`, `<div class="m"><h2>TOOLSPACE</h2>
  <div class="tb"><button aria-label="Item">${ic('newitem', 15)}</button><span class="sp"></span><button aria-label="Reference">${ic('ref', 15)}</button><button aria-label="Panorama">${ic('sheetv', 14)}</button><button aria-label="Help">${ic('qbox', 14)}</button></div>
  <div class="sel"><select aria-label="View"><option>Active Drawing View</option></select><svg width="10" height="7"><path d="M1 1l4 4 4-4" fill="none" stroke="#444" stroke-width="1.200"/></svg></div>
  <c3d-tree></c3d-tree><div class="d"></div></div>
  <div class="v"><button class="on">Prospector</button><button>Settings</button><button>Survey</button><button>Toolbox</button></div>`);

/* ---------- drawing area ---------- */
/* small plat labels, too fine to read at this plot scale */
const note = (x, y, w, a = 0, t = 3) => `<g transform="translate(${x} ${y}) rotate(${a}) skewX(-15)" fill="none" stroke="#000"><path d="M0 0h${w}" stroke-width="${t - 1}" stroke-dasharray="2 .8 3.500 1.200 1 .8 2.500 .5"/><path d="M0 ${t / 2}h${w}" stroke-width="1" stroke-dasharray="3 .7 1.500 1.100"/>${t > 3 ? `<path d="M2 -${t / 2}h${w - 5}" stroke-width="1.200" stroke-dasharray="1.500 1.200 4 2"/>` : ''}</g>`;
const red = d => `<path d="${d}" fill="none" stroke="#c22e2e"/>`;
const dash = (d, c, a = '4 2') => `<path d="${d}" fill="none" stroke="${c}" stroke-dasharray="${a}" stroke-width="1.200"/>`;
define('c3d-sheet', `:host { display: block; width: 460px; height: 306px; box-shadow: 0 0 4px 1px #5c5c5c; background: #fff; } svg { display: block; } text { white-space: pre; }`, () => {
  const G = '#3fc84a', C = '#35cdd6', P = '#b53ab8';
  const blocks = [[472, 14], [488, 4], [494, 12], [509, 5], [517, 9], [529, 25], [557, 8], [568, 6], [577, 9], [589, 25], [617, 9]];
  return `<svg width="460" height="306" viewBox="345 230 460 306">
  <rect x="354.500" y="231.500" width="441" height="302" fill="none" stroke="#8a8a8a" stroke-dasharray="5 2"/>
  <text x="505" y="258" font-family="DejaVu Sans" font-weight="bold" font-size="8">BLUEBIRD   RIDGE</text>
  <path d="M448 275h200v5H448z"/>${blocks.map(([x, w]) => `<rect x="${x}" y="270" width="${w}" height="6"/>`).join('')}
  <path d="M385.500 296v52" stroke="#000"/>${dash('M385.500 348L384.500 514', '#d03a3a', '10 2 2 2')}<path d="M385 348.500h9" stroke="#f2e75a"/>
  ${dash('M397.500 297v50', G)}${dash('M514 296l-1 40', G)}${dash('M554.500 296v37', G)}${dash('M597 296l-1 35', G)}${dash('M394 348.500L596 331.500', G)}
  ${dash('M622.500 296v30', C)}${dash('M622 370L678 309', C)}${dash('M624 465L678 371', C)}${dash('M623.500 370v95', C)}${dash('M622 465.500L678 464.500', C)}
  ${red('M447.500 342L447 421')}${red('M447 435v34')}${red('M495 338l3 40 17 30')}${red('M504 429l15 38')}${red('M530 335l26 41')}${red('M591 331l-21 45')}${red('M577 388.500h45')}${red('M567 401l15 65')}
  <path d="M394 470V347.500L622.500 327.500 621.500 465z" fill="none" stroke="#111" stroke-width="1.200"/>
  <path d="M394 419.500h40l13 1.500h39Q500 418 514 408L552 387A13 13 0 1 1 559 400L519 423Q500 434 487 434.500H434L394 434" fill="none" stroke="${C}" stroke-width="1.300"/>
  ${dash('M394 427h93Q500 425 520 413L565 388', '#ecd93c', '12 2 3 2')}
  ${dash('M393.500 471v41.500h60.500C455 485 470 471 486 469', P)}${dash('M467.500 514C466 495 480 482 492 482L578 480Q590 483 590.500 495v19', P)}${dash('M520.500 482v32', P)}${dash('M549 514L590 493', P)}${dash('M582 467Q604 477 604.500 500v14', P)}${dash('M604 500.500h57', P)}${dash('M661.500 466v48', P)}${dash('M624 466h37', P)}
  ${note(391, 336, 28, -90, 2.500)}${note(382, 433, 48, -90, 2.500)}${note(442, 332, 17)}${note(486, 313, 56, 0, 2)}${note(525, 323, 16, 0, 2)}${note(568, 321, 17, 0, 2)}${note(601, 312, 17, 0, 2)}${note(604, 316, 12, 0, 2)}
  ${note(632, 321, 7, -90, 2)}${note(644, 366, 28, -90, 3)}${note(637, 390, 7, -90, 2)}${note(641, 459, 7, -90, 2)}
  ${note(447, 388, 18, -90, 4)}${note(447, 458, 20, -90, 4)}${note(494, 346, 22, 80, 4)}${note(499, 384, 22, 58, 4)}${note(509, 441, 20, 65, 4)}${note(535, 343, 20, 55, 4)}${note(575, 361, 21, -63, 4)}${note(571, 421, 20, 76, 4)}${note(592, 387, 21, 0, 2)}${note(597, 390, 12, 0, 2)}
  ${note(414, 490, 11, 0, 2)}${note(505, 478, 28, 0, 2.500)}${note(494, 494, 7, 0, 2)}${note(547, 491, 10, 0, 2.500)}${note(494, 506, 56, 0, 2.500)}${note(573, 511, 8, 0, 2)}${note(627, 480, 10, 0, 2)}
  <g stroke="#000" fill="none"><path d="M733 402v48M709 426h48" stroke-width="1.500"/><path d="M722 415l22 22M744 415l-22 22"/><circle cx="733" cy="426" r="8" stroke-width="2"/></g>
  <path d="M733 409l3 14 13 3-13 3-3 14-3-14-13-3 13-3z"/><circle cx="709" cy="426" r="2"/><path d="M731 399h4v3h-4zM755 424h4v4h-4zM731 448h4v4h-4z"/>
  ${note(722, 463, 23, 0, 2)}<path d="M715 464v5h40v-5M728 462l3 5 3-5 3 5 4-5" fill="none" stroke="#000"/>${note(715, 469, 40, 0, 3)}${note(724, 475, 20, 0, 2.500)}
  <rect x="710.500" y="495" width="49" height="24" fill="none" stroke="#000" stroke-width="1.500"/><path d="M714 496h40l1 4h-3v3h-38zM712 506h33v2h-33zM717 515h27v2h-27z"/><circle cx="752.500" cy="513" r="5"/>
  </svg>`; });

define('c3d-navbar', `
  :host { display: flex; flex-direction: column; align-items: center; width: 32px; height: 127px; border: 2px solid #707070; border-radius: 5px; background: #969696; }
  button { width: 28px; height: 37px; } .s { height: 12px; justify-content: flex-end; padding-right: 2px; border-bottom: 1px solid #858585; } svg { display: block; }
`, `<button class="s" aria-label="Close bar"><svg width="8" height="8"><circle cx="4" cy="4" r="3" fill="none" stroke="#777"/><path d="M3 3l2 2M5 3L3 5" stroke="#777"/></svg></button>
  <button aria-label="Wheel"><svg width="24" height="26"><g fill="none" stroke="#7a7a7a"><circle cx="11" cy="11" r="9"/><circle cx="11" cy="11" r="4"/></g><text x="11" y="24" font-size="9" font-weight="bold" fill="#74748e">2D</text></svg></button>
  <button aria-label="Pan"><svg width="24" height="26"><path d="M7 23C3 17 1 14 2 13s3 1 5 3L5 6c1-2 2-1 4 7V3c1-2 2-1 3 0v9l3-9c2-1 2 0 2 1l-2 9 4-6c2 0 2 1 1 3l-5 13z" fill="none" stroke="#7a7a7a"/></svg></button>
  <button aria-label="Zoom"><svg width="24" height="26"><path d="M2 2l18 18M18 2L2 20M2 6V2h4M14 2h4v4M2 16v4h4" fill="none" stroke="#757575"/><circle cx="17" cy="16" r="4" fill="#969696" stroke="#757575"/></svg></button>`);

define('c3d-command', `
  :host { display: flex; height: 26px; border: 1px solid #666; border-left: 0; }
  .h { display: flex; align-items: center; width: 52px; background: #454a54; gap: 6px; padding-left: 3px; color: #ddd; }
  .grip { width: 5px; height: 16px; background: repeating-linear-gradient(#ccc 0 1px, transparent 1px 3px); }
  .f { flex: 1; display: flex; align-items: center; background: #dedede; padding: 0 4px; color: #666; }
  input { flex: 1; min-width: 0; font: italic 11px/16px "DejaVu Sans Mono", monospace; color: #333; padding-left: 8px; } input::placeholder { color: #808080; opacity: 1; }
  .up { transform: rotate(180deg); }
`, `<div class="h"><i class="grip"></i><button aria-label="Close">${ic('close', 13)}</button><button aria-label="Customize">${ic('wrench', 16)}</button></div>
  <div class="f"><button aria-label="Recent commands">${ic('prompt', 16)}${caret}</button><input aria-label="Command" placeholder="Type a command"><button aria-label="History"><i class="caret up"></i></button></div>`);

define('c3d-canvas', `
  :host { display: block; flex: 1; min-width: 0; position: relative; background: #8a8a8a; overflow: hidden; }
  c3d-sheet { position: absolute; left: 125px; top: 70px; }
  .red { position: absolute; left: 695px; top: 340px; } .cross { position: absolute; left: 705px; top: 233px; } .ucs { position: absolute; left: 8px; bottom: 10px; }
  .win { position: absolute; right: 9px; top: 6px; display: flex; gap: 4px; } .win button { width: 15px; height: 16px; }
  c3d-navbar { position: absolute; right: 3px; top: 206px; }
  c3d-command { position: absolute; left: 60px; right: 61px; bottom: 1px; }
  svg { display: block; fill: none; }
`, `<c3d-sheet></c3d-sheet>
  <svg class="red" width="38" height="38"><path d="M.5 2.500H18V1.500h17.500v35h-17v-1M18.500 36.500H.5V2" stroke="#d92626"/><path d="M1 9.500h7v-1h7.500v8H1z" stroke="#222"/></svg>
  <svg class="cross" width="67" height="67"><path d="M33.500 1v30M33.500 37v29M1 33.500h30M37 33.500h29M30.500 30.500h6v6h-6z" stroke="#1a1a1a"/></svg>
  <svg class="ucs" width="50" height="85"><path d="M2.500 2L48 83.500H2.500zM2.500 75.500h8v8M3 26l7 6 6-6M10 32v6M28 69l12 13M42 69L29 82" stroke="#2747c9" stroke-width="1.300"/></svg>
  <div class="win"><button aria-label="Minimize">${ic('wmin', 12)}</button><button aria-label="Restore">${ic('wrestore', 12)}</button><button aria-label="Close">${ic('wclose', 12)}</button></div>
  <c3d-navbar></c3d-navbar><c3d-command></c3d-command>`);

define('c3d-rail', `
  :host { display: flex; flex-direction: column; width: 28px; flex: none; background: #364050; border-left: 4px solid #2c3645; border-right: 2px solid #26402f; overflow: hidden; padding-top: 3px; }
  button { height: 21px; padding-left: 2px; flex: none; justify-content: flex-start; } hr { height: 2px; border: 0; background: #dfe3e6; margin: 2px 0 1px; flex: none; width: 100%; }
  .grip { height: 5px; margin: 0 3px 0; background: repeating-linear-gradient(90deg, #c5cad0 0 1px, transparent 1px 3px); flex: none; border-bottom: 1px solid #364050; }
`, `<i class="grip"></i>${Array.from({ length: 23 }, (_, i) => `<button aria-label="Snap ${i + 1}">${ic('q' + (i + 1))}</button>${[12, 13, 16].includes(i) ? '<hr>' : ''}`).join('')}`);

/* ---------- status bar and taskbar ---------- */
define('c3d-status', `
  :host { display: flex; height: 27px; background: #1f2932; justify-content: space-between; }
  .t { display: flex; color: #aab2bb; padding-left: 3px; } .t button { height: 17px; padding: 0 11px; background: #28323d; border-radius: 0 0 8px 8px; }
  .t .on { background: #3b4453; color: #fff; font-weight: bold; } .t .add { padding: 0 7px; margin-left: 3px; }
  .r { display: flex; gap: 3px; padding: 2px 0; color: #dde1e4; }
  .g { display: flex; background: #323b49; } .g button { height: 22px; } .blue { background: #5489b9; } .gap { margin-right: 2px; }
`, `<div class="t"><button>Model</button><button class="on">Layout1</button><button>Layout2</button><button class="add" aria-label="New layout">${ic('plus', 9)}</button></div>
  <div class="r"><div class="g"><button style="width:37px">PAPER</button></div>
  <div class="g">${[['ortho', 21, 1], ['polar', 26], ['', 10], ['iso', 27], ['', 13], ['otrack', 21, 1], ['osnap', 21, 1], ['', 14]].map(([n, w, b]) => `<button class="${b ? 'blue' : ''} ${n == 'otrack' ? 'gap' : ''}" aria-label="${n || 'list'}" style="width:${w}px">${n ? ic(n) : caret}</button>`).join('')}</div>
  <div class="g">${['anno1', 'anno2', 'anno3'].map(n => `<button style="width:23px" aria-label="${n}">${ic(n)}</button>`).join('')}</div>
  <div class="g"><button style="width:20px" aria-label="Settings">${ic('gear', 14)}</button><button style="width:15px" aria-label="Settings list">${caret}</button></div>
  <div class="g"><button style="width:23px" aria-label="Add scale">${ic('plus', 14)}</button></div>
  <div class="g"><button style="width:23px" aria-label="Isolate">${ic('shapes')}</button></div>
  <div class="g"><button style="width:20px" aria-label="Performance">${ic('globe')}</button></div>
  <div class="g"><button style="width:24px" aria-label="Clean screen">${ic('full', 15)}</button><button style="width:22px;justify-content:flex-end;overflow:hidden" aria-label="Customize">${ic('menu', 19)}</button></div></div>`);

define('c3d-taskbar', `
  :host { display: flex; justify-content: space-between; height: 34px; background: linear-gradient(90deg, #cfe6ee, #d2e6ef 60%, #cddae8); border-bottom: 2px solid #000; color: #111; overflow: hidden; }
  .a { display: flex; margin-left: -8px; } .a button { width: 46px; height: 32px; padding-top: 5px; } .a .on { background: #e3f1f6; }
  .c { width: 56px; height: 32px; line-height: 16px; flex-direction: column; padding-top: 3px; }
`, `<div class="a">${[['win', 15], ['search', 15], ['cortana', 15], ['task', 16], ['edge', 19], ['folder', 20], ['shop', 21], ['mail', 22], ['app4', 20], ['photos', 20], ['c3d', 20], ['chrome', 20]].map(([n, s]) => `<button class="${n == 'c3d' ? 'on' : ''}" aria-label="${n}">${ic(n, s)}</button>`).join('')}</div>
  <button class="c"><span>5:18 PM</span><span>5/12/2020</span></button>`);

define('c3d-app', `
  :host { display: flex; flex-direction: column; height: 100vh; background: #212b35; overflow: hidden; }
  .top { display: grid; grid-template-columns: 30px 1fr; } .main { flex: 1; display: flex; min-height: 0; }
  c3d-titlebar { padding-left: 6px; } .top > div { min-width: 0; }
`, `<div class="top"><c3d-appbutton></c3d-appbutton><div><c3d-titlebar></c3d-titlebar><c3d-tabs></c3d-tabs></div></div>
  <c3d-ribbon></c3d-ribbon><c3d-docs></c3d-docs>
  <div class="main"><c3d-toolspace></c3d-toolspace><c3d-canvas></c3d-canvas><c3d-rail></c3d-rail></div>
  <c3d-status></c3d-status><c3d-taskbar></c3d-taskbar>`);
</script>
</body>
</html>
